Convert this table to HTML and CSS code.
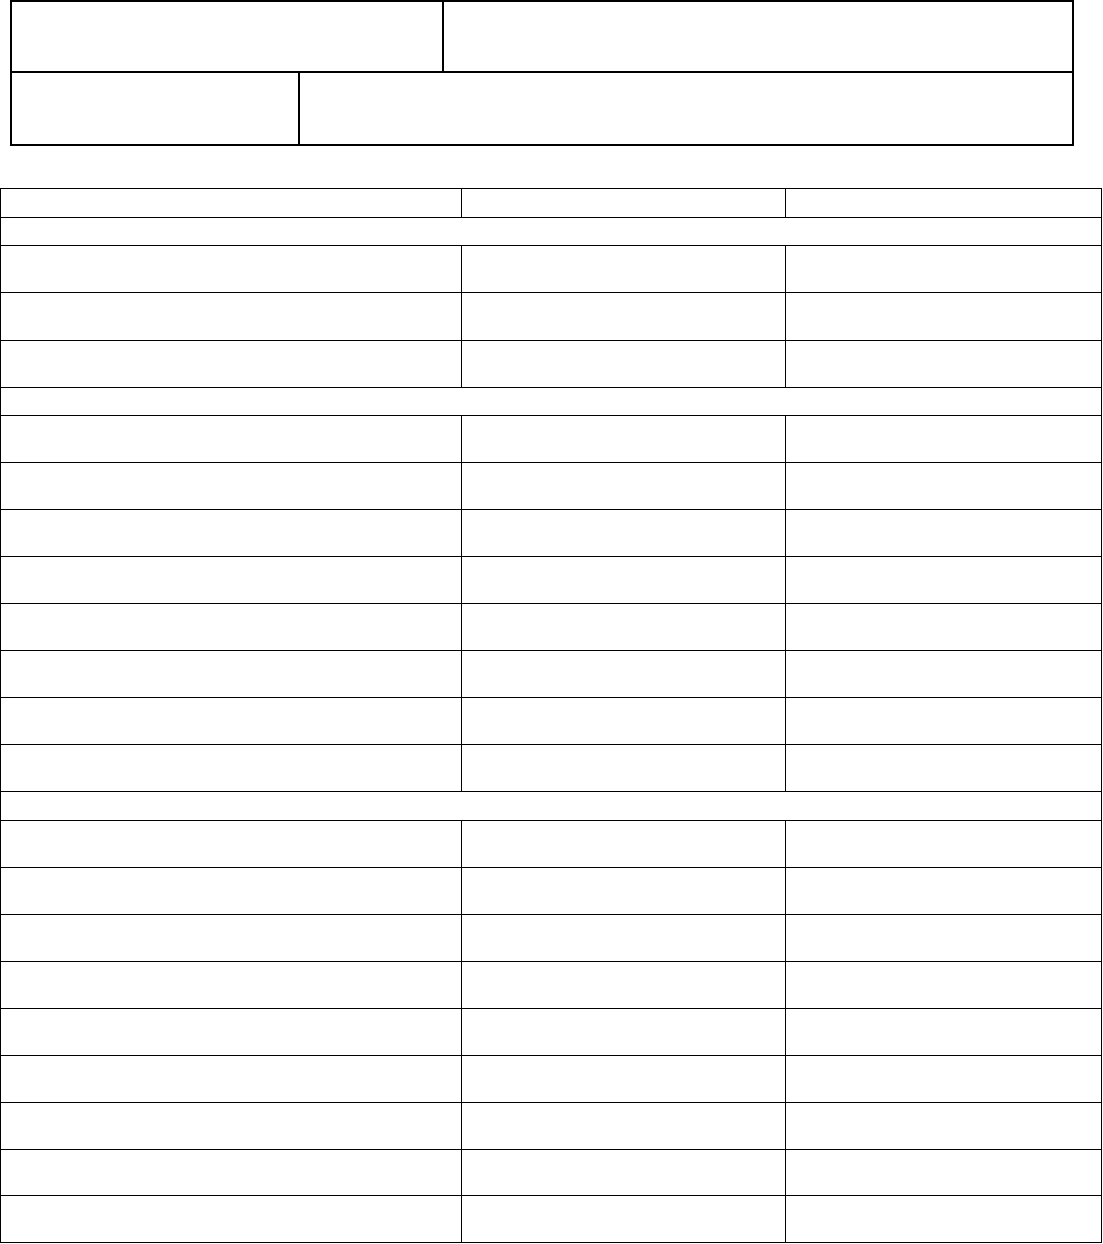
FILE: index.html
```html
<!DOCTYPE html>
<html>
<head>
<meta charset="utf-8">
<link rel="stylesheet" href="styles.css">
</head>
<body>
<div class="head-box">
  <div class="head-row first">
    <div class="cell c1a"></div>
    <div class="cell grow"></div>
  </div>
  <div class="head-row second">
    <div class="cell c2a"></div>
    <div class="cell grow"></div>
  </div>
</div>
<table class="grid">
  <colgroup><col class="w1"><col class="w2"><col class="w3"></colgroup>
  <tr class="hdr"><td></td><td></td><td></td></tr>
  <tr class="sec"><td colspan="3"></td></tr>
  <tr class="row"><td></td><td></td><td></td></tr>
  <tr class="row tall"><td></td><td></td><td></td></tr>
  <tr class="row"><td></td><td></td><td></td></tr>
  <tr class="sec"><td colspan="3"></td></tr>
  <tr class="row"><td></td><td></td><td></td></tr>
  <tr class="row"><td></td><td></td><td></td></tr>
  <tr class="row"><td></td><td></td><td></td></tr>
  <tr class="row"><td></td><td></td><td></td></tr>
  <tr class="row"><td></td><td></td><td></td></tr>
  <tr class="row"><td></td><td></td><td></td></tr>
  <tr class="row"><td></td><td></td><td></td></tr>
  <tr class="row"><td></td><td></td><td></td></tr>
  <tr class="sec wide"><td colspan="3"></td></tr>
  <tr class="row"><td></td><td></td><td></td></tr>
  <tr class="row"><td></td><td></td><td></td></tr>
  <tr class="row"><td></td><td></td><td></td></tr>
  <tr class="row"><td></td><td></td><td></td></tr>
  <tr class="row"><td></td><td></td><td></td></tr>
  <tr class="row"><td></td><td></td><td></td></tr>
  <tr class="row"><td></td><td></td><td></td></tr>
  <tr class="row short"><td></td><td></td><td></td></tr>
  <tr class="row"><td></td><td></td><td></td></tr>
</table>
</body>
</html>
```
FILE: styles.css
```css
html, body {
  margin: 0;
  padding: 0;
  background: #fff;
  font-family: "Liberation Sans", Arial, sans-serif;
}
.head-box {
  box-sizing: border-box;
  margin-left: 10px;
  width: 1064px;
  border: 2px solid #000;
  display: flex;
  flex-direction: column;
}
.head-row {
  display: flex;
}
.head-row.first {
  height: 69px;
}
.head-row.second {
  height: 71px;
  border-top: 2px solid #000;
}
.cell {
  box-sizing: border-box;
}
.c1a {
  width: 432px;
  border-right: 2px solid #000;
}
.c2a {
  width: 288px;
  border-right: 2px solid #000;
}
.grow {
  flex: 1;
}
.grid {
  margin-top: 42px;
  border-collapse: collapse;
  table-layout: fixed;
  width: 1102px;
}
.grid td {
  border: 1px solid #000;
  padding: 0;
}
.w1 { width: 461px; }
.w2 { width: 324px; }
.w3 { width: 316px; }
.hdr td { height: 28px; }
.sec td { height: 27px; }
.sec.wide td { height: 28px; }
.row td { height: 46px; }
.row.tall td { height: 47px; }
.row.short td { height: 45px; }
```
